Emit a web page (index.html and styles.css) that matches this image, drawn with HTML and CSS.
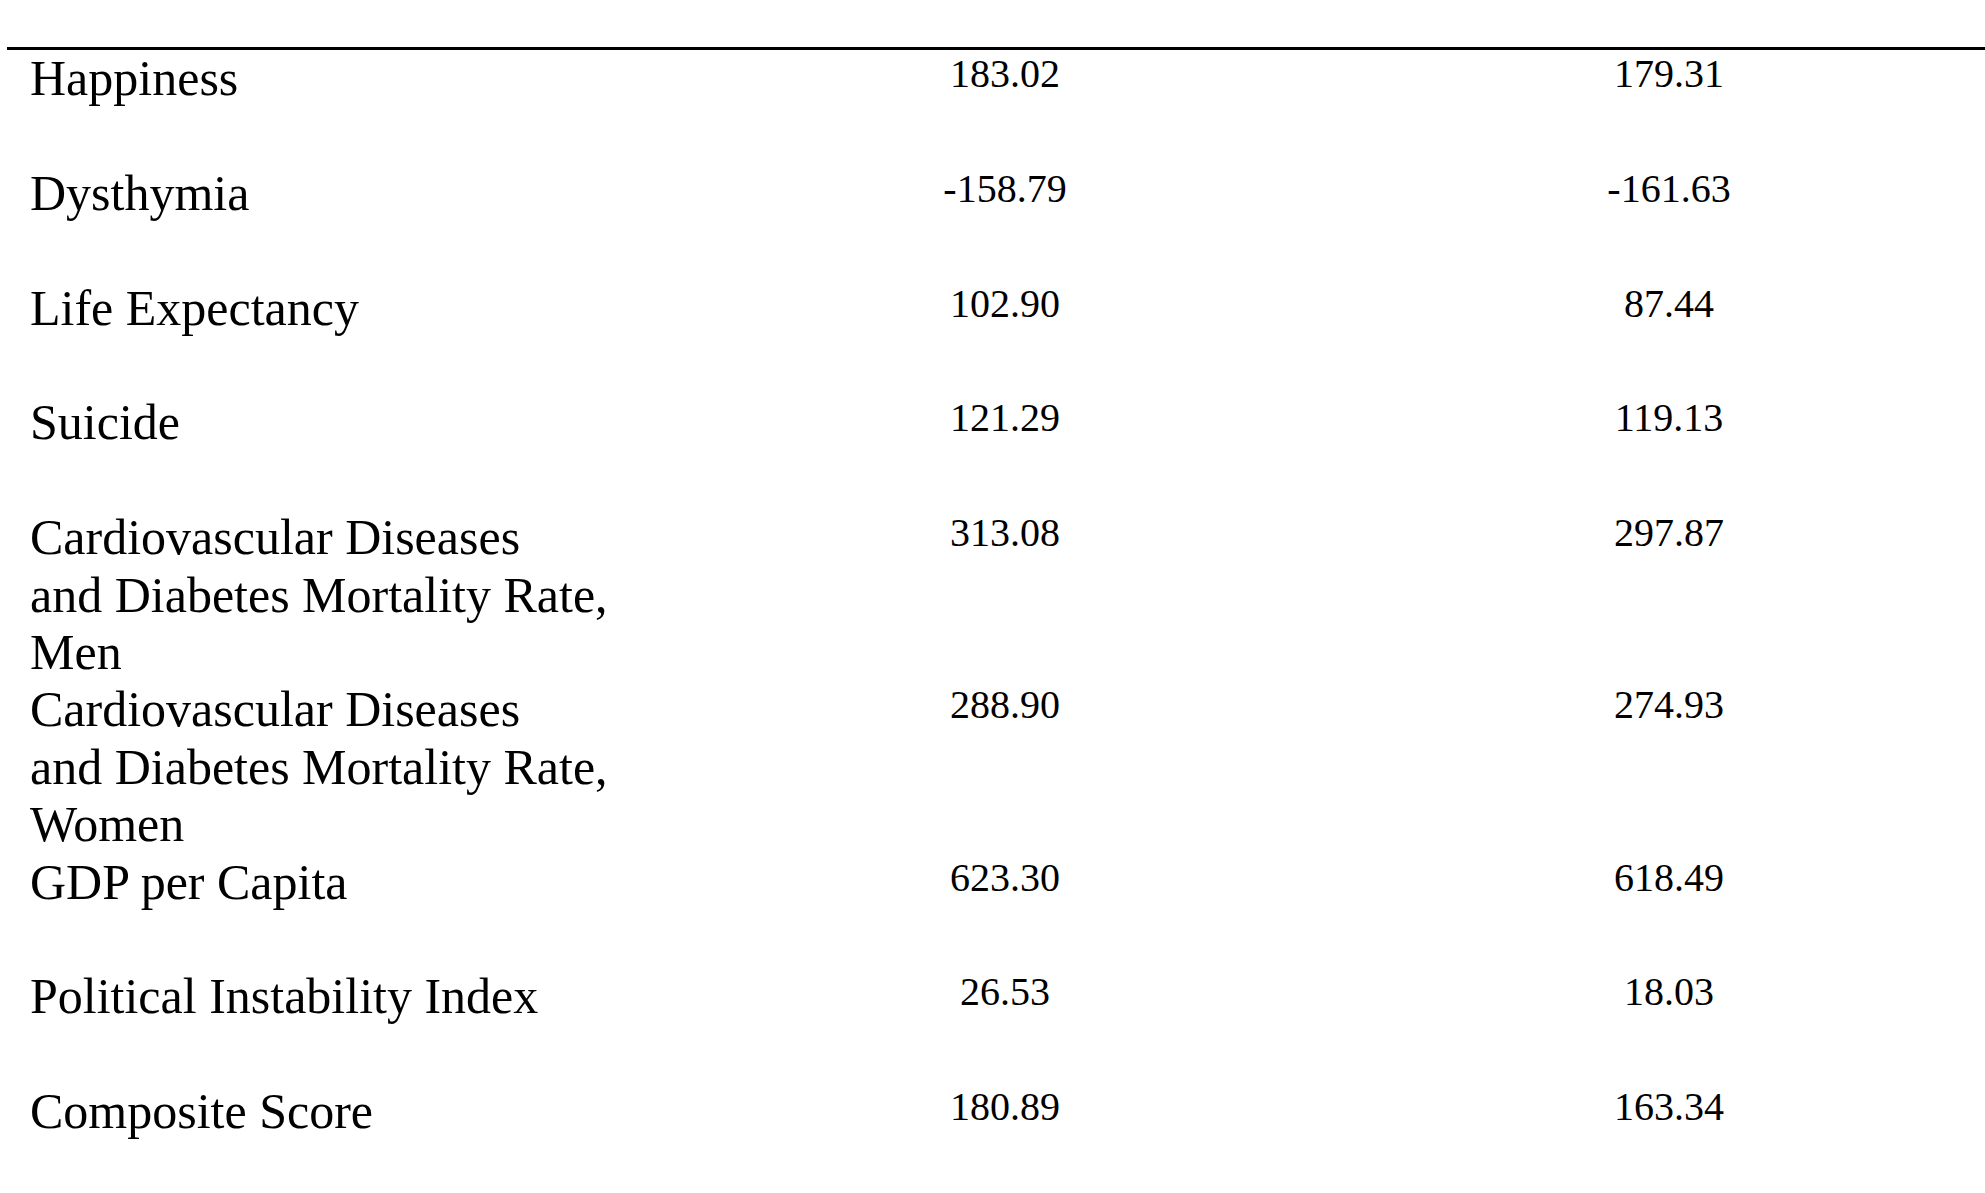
FILE: index.html
```html
<!DOCTYPE html>
<html lang="en">
<head>
<meta charset="utf-8">
<title>Table</title>
<link rel="stylesheet" href="styles.css">
</head>
<body>
<div class="table">
  <div class="row">
    <div class="label">Happiness</div>
    <div class="num">183.02</div>
    <div class="num">179.31</div>
  </div>
  <div class="row">
    <div class="label">Dysthymia</div>
    <div class="num">-158.79</div>
    <div class="num">-161.63</div>
  </div>
  <div class="row">
    <div class="label">Life Expectancy</div>
    <div class="num">102.90</div>
    <div class="num">87.44</div>
  </div>
  <div class="row">
    <div class="label">Suicide</div>
    <div class="num">121.29</div>
    <div class="num">119.13</div>
  </div>
  <div class="row tall">
    <div class="label">Cardiovascular Diseases<br>and Diabetes Mortality Rate,<br>Men</div>
    <div class="num">313.08</div>
    <div class="num">297.87</div>
  </div>
  <div class="row tall">
    <div class="label">Cardiovascular Diseases<br>and Diabetes Mortality Rate,<br>Women</div>
    <div class="num">288.90</div>
    <div class="num">274.93</div>
  </div>
  <div class="row">
    <div class="label">GDP per Capita</div>
    <div class="num">623.30</div>
    <div class="num">618.49</div>
  </div>
  <div class="row">
    <div class="label">Political Instability Index</div>
    <div class="num">26.53</div>
    <div class="num">18.03</div>
  </div>
  <div class="row">
    <div class="label">Composite Score</div>
    <div class="num">180.89</div>
    <div class="num">163.34</div>
  </div>
</div>
</body>
</html>
```

FILE: styles.css
```css
html {
  overflow: hidden;
  background: #fff;
}

body {
  margin: 0;
  background: #fff;
  color: #000;
  font-family: "Liberation Serif", "Times New Roman", serif;
}

.table {
  margin-top: 47px;
  margin-left: 7px;
  width: 1978px;
  border-top: 3px solid #000;
}

.row {
  display: grid;
  grid-template-columns: 648px 700px 628px;
  align-items: start;
  min-height: 114.8px;
}

.row.tall {
  min-height: 172.2px;
}

.label {
  padding-left: 23px;
  font-size: 50px;
  line-height: 57.4px;
}

.num {
  text-align: center;
  font-size: 40px;
  line-height: 48px;
}
```
